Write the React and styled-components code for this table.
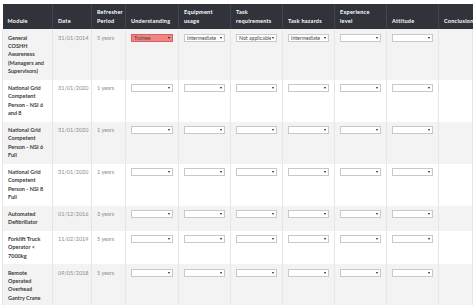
import React from "react";
import styled, { createGlobalStyle } from "styled-components";

const GlobalStyle = createGlobalStyle`
  html, body {
    margin: 0;
    padding: 0;
    background: #ffffff;
  }
  body {
    font-family: Lato, "Open Sans", "Liberation Sans", sans-serif;
    color: #333333;
  }
`;

const Page = styled.div`
  padding: 4px 2px 0 2px;
`;

const Table = styled.table`
  width: 470px;
  border-collapse: collapse;
  table-layout: fixed;
  font-size: 5.5px;
  line-height: 8.35px;
`;

const HeadRow = styled.tr`
  background: #30343a;
`;

const HeadCell = styled.th`
  color: #ffffff;
  font-weight: 700;
  letter-spacing: 0.25px;
  text-align: left;
  vertical-align: bottom;
  padding: 4.3px 5px;
  border-right: 1px solid #41454c;
  &:last-child {
    border-right: none;
  }
`;

const Row = styled.tr`
  background: ${(p) => (p.$striped ? "#f3f3f3" : "#ffffff")};
`;

const Cell = styled.td`
  vertical-align: top;
  padding: 4.3px 5px;
  border-right: 1px solid #e6e6e6;
  &:first-child {
    border-left: 1px solid #e6e6e6;
  }
`;

const ModuleCell = styled(Cell)`
  font-weight: 700;
  color: #3a3a3a;
`;

const MutedCell = styled(Cell)`
  color: #8c8c8c;
  white-space: nowrap;
`;

const SelectWrap = styled.div`
  position: relative;
  width: 100%;
  height: 8px;
  margin-top: 0.3px;
`;

const Select = styled.select`
  appearance: none;
  -webkit-appearance: none;
  display: block;
  width: 100%;
  height: 8px;
  margin: 0;
  padding: 0 5px 0 2px;
  box-sizing: border-box;
  font-family: Lato, "Open Sans", "Liberation Sans", sans-serif;
  font-size: 5.2px;
  line-height: 6px;
  color: #444444;
  border: 1px solid ${(p) => (p.$tone === "bad" ? "#d46262" : "#c9c9c9")};
  background: ${(p) => (p.$tone === "bad" ? "#f28383" : "#ffffff")};
  border-radius: 0;
  outline: none;
`;

const Caret = styled.span`
  position: absolute;
  right: 3px;
  top: 3px;
  width: 0;
  height: 0;
  border-left: 1.2px solid transparent;
  border-right: 1.2px solid transparent;
  border-top: 2px solid #222222;
  pointer-events: none;
`;

const OPTIONS = ["", "Trainee", "Not applicable", "Intermediate", "Advanced", "Expert"];

function Dropdown({ value = "", tone }) {
  return (
    <SelectWrap>
      <Select defaultValue={value} $tone={tone}>
        {OPTIONS.map((o) => (
          <option key={o} value={o}>
            {o}
          </option>
        ))}
      </Select>
      <Caret />
    </SelectWrap>
  );
}

const COLS = [50, 39, 34, 53, 52, 52, 52, 52, 52, 34];

const HEADERS = [
  "Module",
  "Date",
  "Refresher Period",
  "Understanding",
  "Equipment usage",
  "Task requirements",
  "Task hazards",
  "Experience level",
  "Attitude",
  "Conclusion",
];

const ROWS = [
  {
    module: "General COSHH Awareness (Managers and Supervisors)",
    date: "31/01/2014",
    period: "5 years",
    values: [
      { v: "Trainee", tone: "bad" },
      { v: "Intermediate" },
      { v: "Not applicable" },
      { v: "Intermediate" },
      { v: "" },
      { v: "" },
    ],
  },
  { module: "National Grid Competent Person - NSI 6 and 8", date: "31/01/2020", period: "1 years" },
  { module: "National Grid Competent Person - NSI 6 Full", date: "31/01/2020", period: "1 years" },
  { module: "National Grid Competent Person - NSI 8 Full", date: "31/01/2020", period: "1 years" },
  { module: "Automated Defibrillator", date: "01/12/2016", period: "3 years" },
  { module: "Forklift Truck Operator < 7000kg", date: "11/02/2019", period: "5 years" },
  { module: "Remote Operated Overhead Gantry Crane", date: "09/05/2018", period: "5 years" },
];

const EMPTY = Array.from({ length: 6 }, () => ({ v: "" }));

export default function App() {
  return (
    <>
      <GlobalStyle />
      <Page>
        <Table>
          <colgroup>
            {COLS.map((w, i) => (
              <col key={i} style={{ width: w }} />
            ))}
          </colgroup>
          <thead>
            <HeadRow>
              {HEADERS.map((h) => (
                <HeadCell key={h}>{h}</HeadCell>
              ))}
            </HeadRow>
          </thead>
          <tbody>
            {ROWS.map((r, i) => (
              <Row key={r.module} $striped={i % 2 === 0}>
                <ModuleCell>{r.module}</ModuleCell>
                <MutedCell>{r.date}</MutedCell>
                <MutedCell>{r.period}</MutedCell>
                {(r.values || EMPTY).map((s, j) => (
                  <Cell key={j}>
                    <Dropdown value={s.v} tone={s.tone} />
                  </Cell>
                ))}
                <Cell />
              </Row>
            ))}
          </tbody>
        </Table>
      </Page>
    </>
  );
}
